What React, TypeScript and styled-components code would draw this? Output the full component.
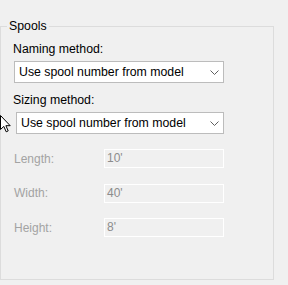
import React from 'react';
import styled, { createGlobalStyle } from 'styled-components';

const GlobalStyle = createGlobalStyle`
  html, body {
    margin: 0;
    padding: 0;
    background: #f0f0f0;
  }
  body {
    font-family: 'Liberation Sans', Arial, sans-serif;
    font-size: 12px;
    color: #000;
  }
`;

const Page = styled.div`
  position: relative;
  width: 288px;
  height: 285px;
  padding-top: 19px;
  box-sizing: border-box;
`;

const Group = styled.fieldset`
  margin: 0;
  padding: 0 0 0 12px;
  width: 274px;
  height: 261px;
  box-sizing: border-box;
  border: 1px solid #dcdcdc;
`;

const Legend = styled.legend`
  margin-left: -6px;
  padding: 0 2px;
  line-height: 14px;
  font-size: 12.3px;
`;

const FieldLabel = styled.div<{ $top: number }>`
  margin-top: ${p => p.$top}px;
  line-height: 15px;
  font-size: 12.3px;
`;

const Combo = styled.div<{ $top: number; $shift: number }>`
  display: flex;
  align-items: center;
  justify-content: space-between;
  margin-top: ${p => p.$top}px;
  margin-left: ${p => p.$shift}px;
  width: ${p => 211 - p.$shift}px;
  height: 22px;
  box-sizing: border-box;
  padding: 0 4px 0 4px;
  background: #ffffff;
  border: 1px solid #bcbcbc;
  font-size: 12.3px;
`;

const Chevron = styled.svg`
  width: 9px;
  height: 5px;
  flex: none;
`;

const Fields = styled.div`
  display: grid;
  grid-template-columns: 91px 120px;
  row-gap: 15.5px;
  margin-top: 15px;
`;

const DimLabel = styled.div`
  display: flex;
  align-items: center;
  padding-left: 1px;
  color: #a3a3a3;
`;

const DimBox = styled.div`
  height: 19px;
  box-sizing: border-box;
  border: 1px solid #ffffff;
  padding-left: 2px;
  line-height: 17px;
  color: #8c8c8c;
`;

const Pointer = styled.svg`
  position: absolute;
  left: 0;
  top: 115px;
  width: 11px;
  height: 18px;
`;

const ComboBox = ({ value, top, shift }: { value: string; top: number; shift: number }) => (
  <Combo $top={top} $shift={shift}>
    <span>{value}</span>
    <Chevron viewBox="0 0 9 5">
      <path d="M0.5 0.5 L4.5 4.5 L8.5 0.5" fill="none" stroke="#5f5f5f" strokeWidth="1" />
    </Chevron>
  </Combo>
);

const dims = [
  { label: 'Length:', value: "10'" },
  { label: 'Width:', value: "40'" },
  { label: 'Height:', value: "8'" },
];

export default function App() {
  return (
    <>
      <GlobalStyle />
      <Page>
        <Group>
          <Legend>Spools</Legend>
          <FieldLabel $top={9}>Naming method:</FieldLabel>
          <ComboBox value="Use spool number from model" top={4} shift={1} />
          <FieldLabel $top={10}>Sizing method:</FieldLabel>
          <ComboBox value="Use spool number from model" top={4} shift={3} />
          <Fields>
            {dims.map(d => (
              <React.Fragment key={d.label}>
                <DimLabel>{d.label}</DimLabel>
                <DimBox>{d.value}</DimBox>
              </React.Fragment>
            ))}
          </Fields>
        </Group>
        <Pointer viewBox="0 0 11 18">
          <path
            d="M0.5 0.5 L0.5 14.5 L3.8 11.4 L6.2 16.8 L8.2 15.9 L5.9 10.7 L10.2 10.7 Z"
            fill="#ffffff"
            stroke="#000000"
            strokeWidth="1"
            strokeLinejoin="miter"
          />
        </Pointer>
      </Page>
    </>
  );
}
